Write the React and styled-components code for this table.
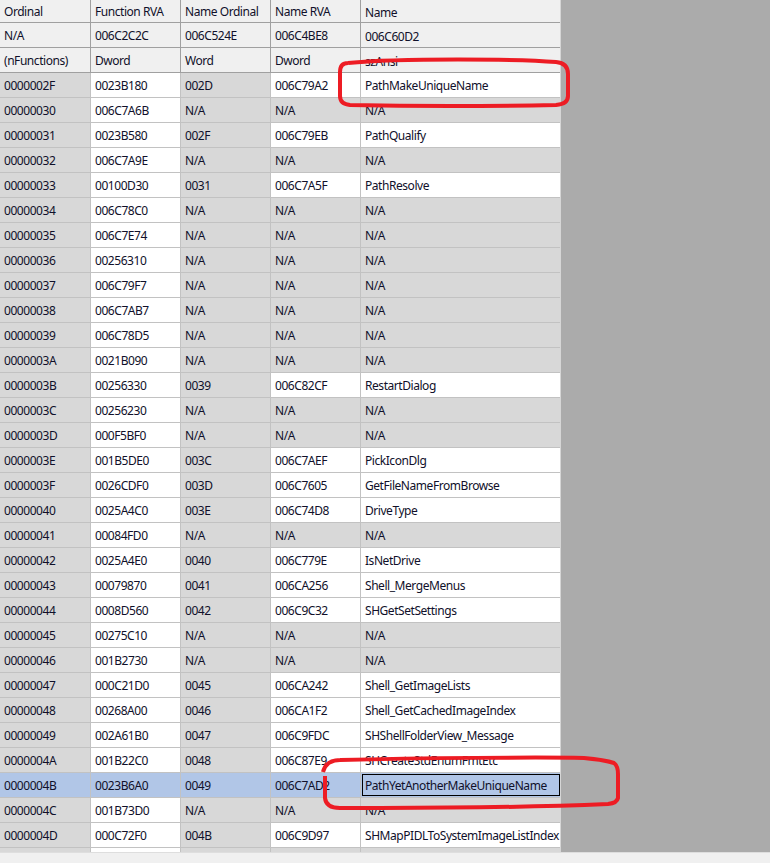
import React from 'react';
import styled, { createGlobalStyle } from 'styled-components';

const GlobalStyle = createGlobalStyle`
    html, body {
        margin: 0;
        padding: 0;
        background: #ababab;
    }
    body {
        font-family: "Segoe UI", "Noto Sans", "Open Sans", Arial, sans-serif;
        font-size: 12px;
        letter-spacing: -0.45px;
        color: #000;
    }
`;

const COLS = '91px 90px 90px 90px 200px';

const Screen = styled.div`
    position: relative;
    width: 770px;
    height: 863px;
    display: flex;
    flex-direction: column;
    overflow: hidden;
    background: #ababab;
`;

const Main = styled.div`
    flex: 1;
    min-height: 0;
    display: flex;
`;

const Grid = styled.div`
    width: 561px;
    display: flex;
    flex-direction: column;
    overflow: hidden;
    border-right: 1px solid #d6d6d6;
    box-sizing: border-box;
`;

const Row = styled.div`
    display: grid;
    grid-template-columns: ${COLS};
    flex-shrink: 0;
    height: ${p => p.$h || 25}px;
    box-sizing: border-box;
    border-bottom: 1px solid ${p => (p.$head ? '#a0a0a0' : '#c2c2c2')};
`;

const tones = {
    head: '#f0f0f0',
    gray: '#d8d8d8',
    white: '#ffffff',
    sel: '#b1c6e7',
};

const Cell = styled.div`
    display: flex;
    align-items: center;
    padding: ${p => (p.$nudge ? '2px 0 0 4px' : '0 0 0 4px')};
    background: ${p => tones[p.$tone]};
    border-right: 1px solid ${p => (p.$tone === 'head' ? '#a0a0a0' : '#c2c2c2')};
    white-space: nowrap;
    overflow: hidden;
    box-sizing: border-box;
    color: #10102a;
    ${p => p.$focus && `
        outline: 1px solid #000;
        outline-offset: -2px;
    `}
`;

const Scrollbar = styled.div`
    height: 10px;
    flex-shrink: 0;
    background: #f0f0f0;
    border-top: 1px solid #dedede;
`;

const Marks = styled.svg`
    position: absolute;
    left: 0;
    top: 0;
    pointer-events: none;
`;

const header = [
    ['Ordinal', 'Function RVA', 'Name Ordinal', 'Name RVA', 'Name'],
    ['N/A', '006C2C2C', '006C524E', '006C4BE8', '006C60D2'],
    ['(nFunctions)', 'Dword', 'Word', 'Dword', 'szAnsi'],
];

const rows = [
    ['0000002F', '0023B180', '002D', '006C79A2', 'PathMakeUniqueName'],
    ['00000030', '006C7A6B'],
    ['00000031', '0023B580', '002F', '006C79EB', 'PathQualify'],
    ['00000032', '006C7A9E'],
    ['00000033', '00100D30', '0031', '006C7A5F', 'PathResolve'],
    ['00000034', '006C78C0'],
    ['00000035', '006C7E74'],
    ['00000036', '00256310'],
    ['00000037', '006C79F7'],
    ['00000038', '006C7AB7'],
    ['00000039', '006C78D5'],
    ['0000003A', '0021B090'],
    ['0000003B', '00256330', '0039', '006C82CF', 'RestartDialog'],
    ['0000003C', '00256230'],
    ['0000003D', '000F5BF0'],
    ['0000003E', '001B5DE0', '003C', '006C7AEF', 'PickIconDlg'],
    ['0000003F', '0026CDF0', '003D', '006C7605', 'GetFileNameFromBrowse'],
    ['00000040', '0025A4C0', '003E', '006C74D8', 'DriveType'],
    ['00000041', '00084FD0'],
    ['00000042', '0025A4E0', '0040', '006C779E', 'IsNetDrive'],
    ['00000043', '00079870', '0041', '006CA256', 'Shell_MergeMenus'],
    ['00000044', '0008D560', '0042', '006C9C32', 'SHGetSetSettings'],
    ['00000045', '00275C10'],
    ['00000046', '001B2730'],
    ['00000047', '000C21D0', '0045', '006CA242', 'Shell_GetImageLists'],
    ['00000048', '00268A00', '0046', '006CA1F2', 'Shell_GetCachedImageIndex'],
    ['00000049', '002A61B0', '0047', '006C9FDC', 'SHShellFolderView_Message'],
    ['0000004A', '001B22C0', '0048', '006C87E9', 'SHCreateStdEnumFmtEtc'],
    ['0000004B', '0023B6A0', '0049', '006C7AD2', 'PathYetAnotherMakeUniqueName'],
    ['0000004C', '001B73D0'],
    ['0000004D', '000C72F0', '004B', '006C9D97', 'SHMapPIDLToSystemImageListIndex'],
    ['0000004E', '000E7FF0'],
];

const SELECTED = '0000004B';

const DataRow = ({ data }) => {
    const [ord, rva, nameOrd = 'N/A', nameRva = 'N/A', name = 'N/A'] = data;
    const sel = data[0] === SELECTED;
    const named = data.length > 2;
    const t = tone => (sel ? 'sel' : tone);
    return (
        <Row>
            <Cell $tone={t('gray')}>{ord}</Cell>
            <Cell $tone={t('white')}>{rva}</Cell>
            <Cell $tone={t('gray')}>{nameOrd}</Cell>
            <Cell $tone={t(named ? 'white' : 'gray')}>{nameRva}</Cell>
            <Cell $tone={t(named ? 'white' : 'gray')} $focus={sel}>{name}</Cell>
        </Row>
    );
};

const App = () => (
    <>
        <GlobalStyle />
        <Screen>
            <Main>
                <Grid>
                    {header.map((cells, i) => (
                        <Row key={i} $head $h={i === 0 ? 23 : 25}>
                            {cells.map((c, j) => (
                                <Cell key={j} $tone="head" $nudge={j === 4}>{c}</Cell>
                            ))}
                        </Row>
                    ))}
                    {rows.map(r => <DataRow key={r[0]} data={r} />)}
                </Grid>
            </Main>
            <Scrollbar />
            <Marks width="770" height="863" viewBox="0 0 770 863">
                <g fill="none" stroke="#ed1c24" strokeWidth="4" strokeLinejoin="round">
                    <path d="M348 63 C 400 58, 520 59, 556 62 Q 568 63 568 74 L 568 96 Q 568 104 556 105 C 500 106, 400 106, 350 105 Q 340 104 340 96 L 340 72 Q 340 63 348 63" />
                    <path d="M323 772 Q 326 760 340 760 C 420 758, 540 757, 584 758 Q 605 760 614 763 Q 618 766 618 774 L 618 798 Q 617 803 608 804 C 560 806, 470 808, 380 808 L 340 808 Q 326 808 325 798 L 325 776" />
                </g>
            </Marks>
        </Screen>
    </>
);

export default App;
